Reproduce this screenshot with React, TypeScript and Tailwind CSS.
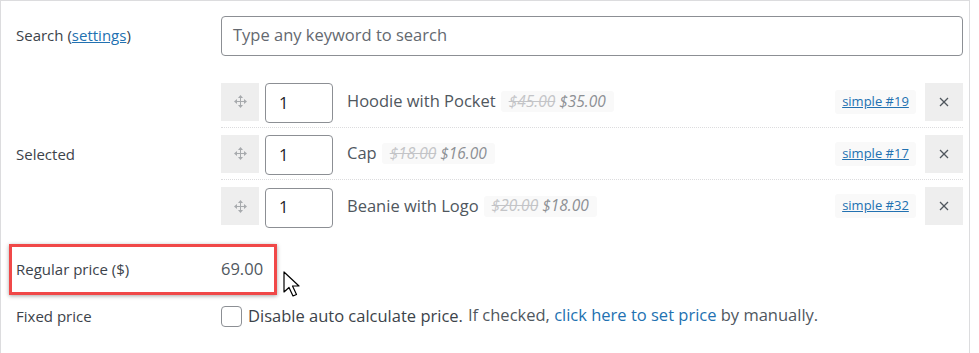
import React from 'react';

interface Item {
  id: number;
  name: string;
  regular: string;
  sale: string;
}

const items: Item[] = [
  { id: 19, name: 'Hoodie with Pocket', regular: '$45.00', sale: '$35.00' },
  { id: 17, name: 'Cap', regular: '$18.00', sale: '$16.00' },
  { id: 32, name: 'Beanie with Logo', regular: '$20.00', sale: '$18.00' },
];

const MoveIcon: React.FC = () => (
  <svg width="13" height="13" viewBox="0 0 13 13" fill="#a7aaad">
    <rect x="6" y="2" width="1" height="9" />
    <rect x="2" y="6" width="9" height="1" />
    <path d="M6.5 0 L9 3 L4 3 Z" />
    <path d="M6.5 13 L9 10 L4 10 Z" />
    <path d="M0 6.5 L3 4 L3 9 Z" />
    <path d="M13 6.5 L10 4 L10 9 Z" />
  </svg>
);

const CloseIcon: React.FC = () => (
  <svg width="10" height="10" viewBox="0 0 10 10" stroke="#50575e" strokeWidth="1.2">
    <line x1="1" y1="1" x2="9" y2="9" />
    <line x1="9" y1="1" x2="1" y2="9" />
  </svg>
);

const Cursor: React.FC = () => (
  <svg width="20" height="28" viewBox="0 0 20 28">
    <path
      d="M1 1 L1 21 L6 16.5 L10 25 L13.5 23.5 L9.5 15 L16 15 Z"
      fill="#ffffff"
      stroke="#000000"
      strokeWidth="1.2"
      strokeLinejoin="round"
    />
  </svg>
);

const App: React.FC = () => {
  return (
    <div className="w-[979px] h-[353px] bg-white font-['Open_Sans',sans-serif] text-[#3c434a] overflow-hidden">
      <div className="w-[970px] h-[353px] border-t border-x border-[#dcdcde] pl-[15px] pr-[6px]">
        {/* Search */}
        <div className="flex items-center mt-[14px] h-[41px]">
          <div className="w-[205px] text-[15px]">
            Search (<a className="text-[#2271b1] underline">settings</a>)
          </div>
          <div className="flex-1 h-[40px] border border-[#8c8f94] rounded-[4px] flex items-center px-[11px] text-[16.5px] text-[#646970]">
            Type any keyword to search
          </div>
        </div>

        {/* Selected */}
        <div className="flex items-center mt-[20px]">
          <div className="w-[205px] text-[15px]">Selected</div>
          <div className="flex-1">
            {items.map((item, i) => (
              <div
                key={item.id}
                className={`flex items-center h-[52px] ${i < items.length - 1 ? 'border-b border-dotted border-[#dcdcde]' : ''}`}
              >
                <div className="w-[38px] h-[38px] bg-[#eeeeee] flex items-center justify-center">
                  <MoveIcon />
                </div>
                <div className="ml-[6px] mt-[3px] w-[68px] h-[40px] border border-[#8c8f94] rounded-[4px] flex items-center pl-[13px] text-[16.5px] text-[#1d2327]">
                  1
                </div>
                <div className="ml-[14px] text-[16.5px] text-[#50575e]">{item.name}</div>
                <div className="ml-[5px] bg-[#f9f9f9] rounded-[3px] px-[8px] h-[21px] flex items-center text-[15.5px] italic gap-[4px]">
                  <span className="line-through text-[#c3c4c7]">{item.regular}</span>
                  <span className="text-[#8c8f94]">{item.sale}</span>
                </div>
                <div className="flex-1" />
                <div className="w-[81px] h-[24px] bg-[#f9f9f9] rounded-[3px] flex items-center justify-center text-[13px]">
                  <a className="text-[#2271b1] underline">simple #{item.id}</a>
                </div>
                <div className="ml-[9px] w-[38px] h-[38px] bg-[#eeeeee] flex items-center justify-center">
                  <CloseIcon />
                </div>
              </div>
            ))}
          </div>
        </div>

        {/* Regular price */}
        <div className="relative flex items-center mt-[12px] h-[51px] text-[15px]">
          <div className="w-[205px]">Regular price ($)</div>
          <div className="text-[16.5px] text-[#50575e]">69.00</div>
          <div className="absolute left-[-7px] top-0 w-[268px] h-[51px] border-[3px] border-[#f04848] shadow-[0_1px_4px_rgba(0,0,0,0.35)]" />
          <div className="absolute left-[267px] top-[27px]">
            <Cursor />
          </div>
        </div>

        {/* Fixed price */}
        <div className="flex items-center h-[42px]">
          <div className="w-[205px] text-[15px]">Fixed price</div>
          <div className="flex items-center">
            <div className="w-[21px] h-[21px] border border-[#8c8f94] rounded-[4px]" />
            <span className="ml-[6px] text-[16.5px]">Disable auto calculate price.</span>
            <span className="ml-[5px] text-[16.5px] -mt-[2px] text-[#50575e]">
              If checked, <span className="text-[#2271b1]">click here to set price</span> by manually.
            </span>
          </div>
        </div>
      </div>
    </div>
  );
};

export default App;
